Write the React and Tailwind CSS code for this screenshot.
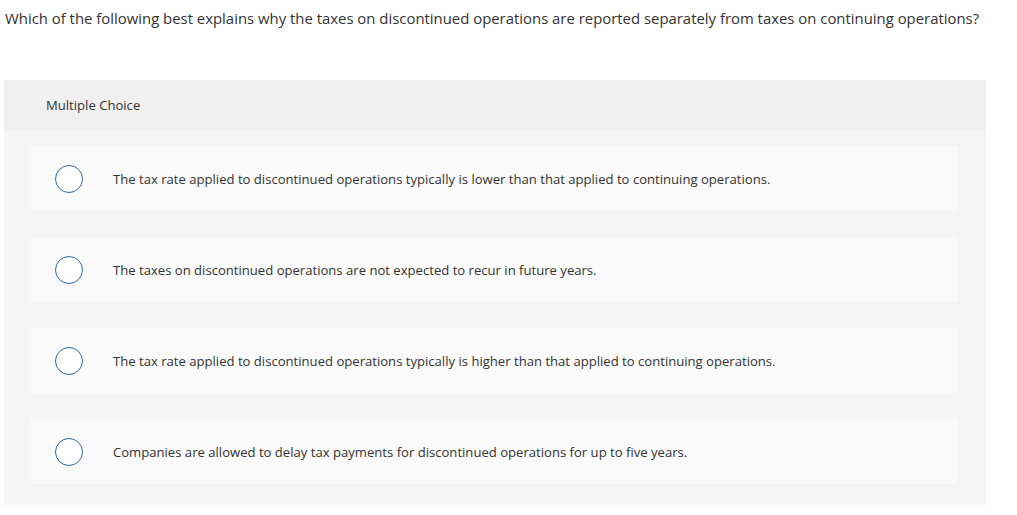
import React from "react";

const options = [
  "The tax rate applied to discontinued operations typically is lower than that applied to continuing operations.",
  "The taxes on discontinued operations are not expected to recur in future years.",
  "The tax rate applied to discontinued operations typically is higher than that applied to continuing operations.",
  "Companies are allowed to delay tax payments for discontinued operations for up to five years.",
];

export default function App() {
  return (
    <div className="w-[1017px] h-[515px] bg-white text-[#333] font-['Open_Sans',sans-serif]">
      <div className="pl-[5px] pt-[8px] text-[14.9px] leading-[20px]">
        Which of the following best explains why the taxes on discontinued operations are reported separately from taxes on continuing operations?
      </div>
      <div className="ml-[4px] mt-[52px] w-[982px] bg-[#f5f5f5]">
        <div className="h-[50px] bg-[#f0f0f0] pl-[42px] pt-[2px] flex items-center text-[13.1px]">
          Multiple Choice
        </div>
        <div className="pl-[26px] pr-[28px] pt-[16px] pb-[21px] flex flex-col gap-[26px]">
          {options.map((o) => (
            <div key={o} className="h-[65px] bg-[#fafafa] rounded-[3px] flex items-center">
              <div className="ml-[25px] w-[28px] h-[28px] rounded-full border-[1.5px] border-[#2d6aa1] bg-white shrink-0" />
              <div className="ml-[30px] pt-[2px] text-[13.1px]">{o}</div>
            </div>
          ))}
        </div>
      </div>
    </div>
  );
}
